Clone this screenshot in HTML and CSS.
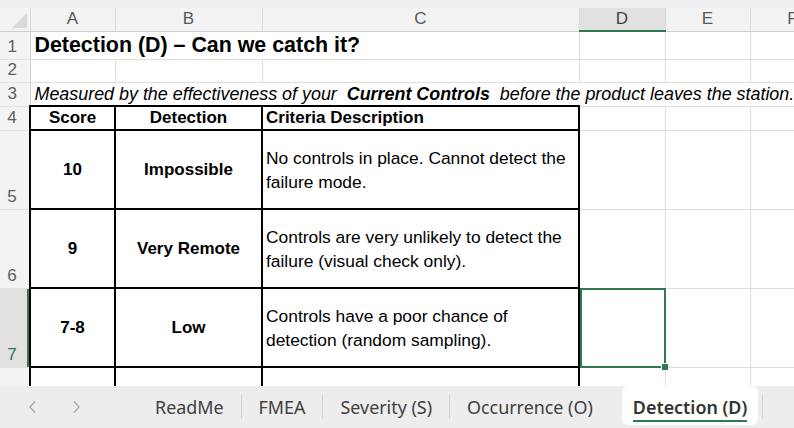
FILE: index.html
```html
<!DOCTYPE html>
<html lang="en">

<head>
  <meta charset="UTF-8">
  <meta name="viewport" content="width=device-width, initial-scale=1.0">
  <title>FMEA - Detection (D)</title>
  <link rel="stylesheet" href="styles.css">
</head>

<body>

  <div class="app">
    <div class="topstrip"></div>

    <div class="sheet">
      <table class="grid">
        <colgroup>
          <col class="c-hdr">
          <col class="c-a">
          <col class="c-b">
          <col class="c-c">
          <col class="c-d">
          <col class="c-e">
          <col class="c-f">
        </colgroup>
        <thead>
          <tr class="col-heads">
            <th class="corner"><span class="tri"></span></th>
            <th>A</th>
            <th>B</th>
            <th>C</th>
            <th class="active">D</th>
            <th>E</th>
            <th>F</th>
          </tr>
        </thead>
        <tbody>
          <tr class="r1">
            <th>1</th>
            <td colspan="3" class="title">Detection (D) – Can we catch it?</td>
            <td></td><td></td><td></td>
          </tr>
          <tr class="r2">
            <th>2</th>
            <td></td><td></td><td></td><td></td><td></td><td></td>
          </tr>
          <tr class="r3">
            <th>3</th>
            <td colspan="6" class="note">Measured by the effectiveness of your&nbsp; <b>Current Controls</b>&nbsp; before the product leaves the station.</td>
          </tr>
          <tr class="r4">
            <th>4</th>
            <td class="box bold">Score</td>
            <td class="box bold">Detection</td>
            <td class="box bold left">Criteria Description</td>
            <td></td><td></td><td></td>
          </tr>
          <tr class="tall">
            <th>5</th>
            <td class="box bold">10</td>
            <td class="box bold">Impossible</td>
            <td class="box left">No controls in place. Cannot detect the failure mode.</td>
            <td></td><td></td><td></td>
          </tr>
          <tr class="tall">
            <th>6</th>
            <td class="box bold">9</td>
            <td class="box bold">Very Remote</td>
            <td class="box left">Controls are very unlikely to detect the failure (visual check only).</td>
            <td></td><td></td><td></td>
          </tr>
          <tr class="tall">
            <th class="active">7</th>
            <td class="box bold">7-8</td>
            <td class="box bold">Low</td>
            <td class="box left">Controls have a poor chance of detection (random sampling).</td>
            <td class="sel"></td><td></td><td></td>
          </tr>
          <tr class="tall">
            <th></th>
            <td class="box open"></td>
            <td class="box open"></td>
            <td class="box open"></td>
            <td></td><td></td><td></td>
          </tr>
        </tbody>
      </table>
    </div>

    <div class="tabs">
      <div class="nav">
        <svg width="10" height="14" viewBox="0 0 10 14"><path d="M7 1.5 L2 7 L7 12.5" fill="none" stroke="#a8a8a8" stroke-width="1.3"/></svg>
        <svg width="10" height="14" viewBox="0 0 10 14"><path d="M3 1.5 L8 7 L3 12.5" fill="none" stroke="#a8a8a8" stroke-width="1.3"/></svg>
      </div>
      <div class="tab">ReadMe</div>
      <div class="tab">FMEA</div>
      <div class="tab">Severity (S)</div>
      <div class="tab">Occurrence (O)</div>
      <div class="tab current"><span>Detection (D)</span></div>
      <div class="tab last"></div>
    </div>
  </div>

</body>

</html>
```

FILE: styles.css
```css
body {
  margin: 0;
  font-family: "Liberation Sans", Arial, sans-serif;
  background: #ffffff;
}

.app {
  width: 794px;
  height: 428px;
  display: flex;
  flex-direction: column;
  overflow: hidden;
}

.topstrip {
  height: 8px;
  background: #eeeeee;
}

.sheet {
  flex: 1;
  overflow: hidden;
}

.grid {
  border-collapse: collapse;
  table-layout: fixed;
  width: 835px;
  font-size: 17px;
  line-height: 20px;
  color: #000;
}

.c-hdr { width: 30px; }
.c-a { width: 85px; }
.c-b { width: 147px; }
.c-c { width: 317px; }
.c-d { width: 86px; }
.c-e { width: 85px; }
.c-f { width: 85px; }

.grid td {
  border: 1px solid #dedede;
  padding: 0 3px;
  white-space: nowrap;
}

/* column and row headings */
.col-heads th {
  height: 22px;
  background: #f3f3f3;
  color: #5a5a5a;
  font-weight: normal;
  font-size: 17px;
  border-right: 1px solid #dadada;
  border-bottom: 1px solid #cfcfcf;
  padding: 0;
}

.col-heads th.active {
  background: #e1e1e1;
  color: #444;
  border-bottom: 2px solid #2f7a52;
}

.corner {
  position: relative;
}

.corner .tri {
  position: absolute;
  right: 3px;
  bottom: 3px;
  width: 0;
  height: 0;
  border-left: 15px solid transparent;
  border-bottom: 15px solid #d9d9d9;
}

tbody th {
  background: #f3f3f3;
  color: #5f5f5f;
  font-weight: normal;
  font-size: 17px;
  vertical-align: bottom;
  text-align: center;
  padding: 0 5px 2px 0;
  border-right: 1px solid #cfcfcf;
  border-bottom: 1px solid #e2e2e2;
}

tbody th.active {
  background: #e1e1e1;
  color: #2f7a52;
  box-shadow: inset -2px 0 0 #2f7a52;
}

.r1 { height: 28px; }
.r2 { height: 23px; }
.r3 { height: 24px; }
.r4 { height: 24px; }
.tall { height: 79px; }

.title {
  font-weight: bold;
  font-size: 21.4px;
  line-height: 22px;
  padding-left: 4px !important;
}

.note {
  font-style: italic;
  font-size: 17.9px;
  line-height: 20px;
  padding-left: 4px !important;
}

.grid td.box {
  border: 2px solid #000;
  text-align: center;
  vertical-align: middle;
}

.grid td.box.open {
  border-bottom: none;
}

.bold {
  font-weight: bold;
}

.grid td.left {
  text-align: left;
  white-space: normal;
  line-height: 24px;
  font-size: 17.4px;
}

.grid td.left.bold {
  font-size: 17px;
  line-height: 20px;
}

.grid td.sel {
  position: relative;
}

.grid td.sel::after {
  content: "";
  position: absolute;
  left: 0;
  top: -1px;
  right: -1px;
  bottom: -1px;
  border: 2px solid #2f7a52;
}

.grid td.sel::before {
  content: "";
  position: absolute;
  right: -4px;
  bottom: -4px;
  width: 6px;
  height: 6px;
  background: #2f7a52;
  border: 1px solid #fff;
  z-index: 2;
}

/* sheet tabs */
.tabs {
  height: 42px;
  flex-shrink: 0;
  background: #ededed;
  display: flex;
  align-items: center;
  font-family: "Noto Sans", "Open Sans", sans-serif;
  font-size: 17.9px;
  color: #404040;
}

.nav {
  width: 138px;
  flex-shrink: 0;
  display: flex;
  gap: 33px;
  padding-left: 28px;
  box-sizing: border-box;
}

.tab {
  padding: 0 17px;
  border-right: 1px solid #d2d2d2;
  line-height: 24px;
  white-space: nowrap;
}

.tab:nth-last-child(3) {
  border-right: none;
}

.tab.current {
  margin-left: 12px;
  align-self: stretch;
  display: flex;
  align-items: center;
  background: #fff;
  border-radius: 6px;
  margin-bottom: 3px;
  padding: 0 11px;
  border-right: none;
  font-weight: 600;
  color: #333;
}

.tab.current span {
  border-bottom: 2px solid #2f7a52;
  line-height: 26px;
  margin-top: 4px;
}

.tab.last {
  height: 24px;
  padding: 0 0 0 4px;
  border-right: none;
  border-left: 1px solid #d2d2d2;
  margin-left: 4px;
}
```
